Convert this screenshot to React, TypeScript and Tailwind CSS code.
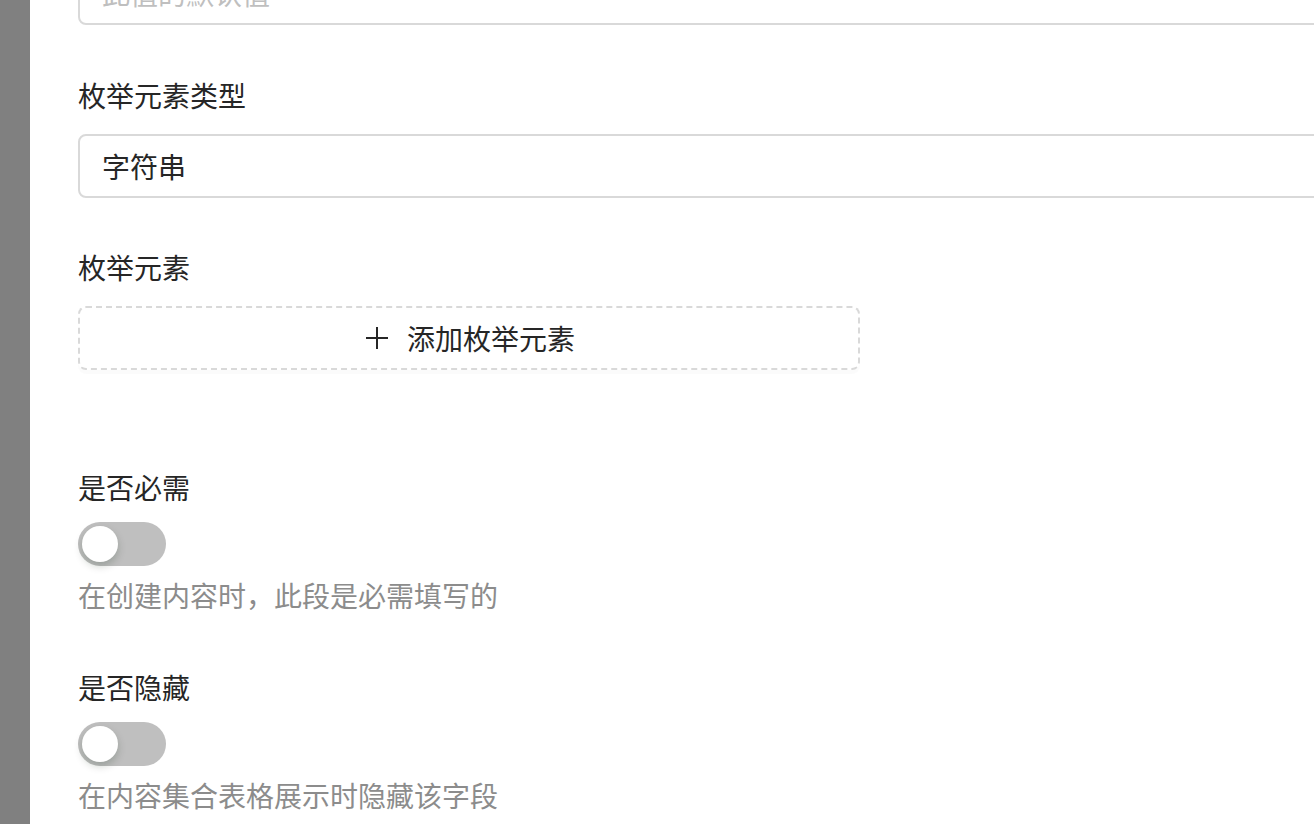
import React from "react";

const font = { fontFamily: '"Noto Sans CJK SC", "Noto Sans", sans-serif' };

function Label({ children, className = "" }: { children: React.ReactNode; className?: string }) {
  return <div className={`text-[28px] leading-[44px] text-[#262626] ${className}`}>{children}</div>;
}

function Switch({ className = "" }: { className?: string }) {
  return (
    <div className={`relative w-[88px] h-[44px] rounded-full bg-[#bfbfbf] ${className}`}>
      <div className="absolute left-[4px] top-[4px] w-[36px] h-[36px] rounded-full bg-white shadow-[0_4px_8px_0_rgba(0,35,11,0.2)]" />
    </div>
  );
}

export default function App() {
  return (
    <div className="flex w-[1314px] h-[824px] overflow-hidden bg-white" style={font}>
      <div className="w-[30px] shrink-0 bg-[#808080]" />
      <div className="flex-1 bg-white pl-[48px] overflow-hidden">
        <div className="flex flex-col w-[1280px]">
          <div className="mt-[-39px] h-[64px] border-2 border-[#d9d9d9] rounded-[8px] px-[22px] flex items-center text-[28px] text-[#bfbfbf]">
            此值的默认值
          </div>

          <Label className="mt-[48px]">枚举元素类型</Label>
          <div className="mt-[17px] h-[64px] border-2 border-[#d9d9d9] rounded-[8px] px-[22px] flex items-center text-[28px] text-[#262626]">
            字符串
          </div>

          <Label className="mt-[47px]">枚举元素</Label>
          <div className="mt-[17px] w-[782px] h-[64px] border-2 border-dashed border-[#d9d9d9] rounded-[8px] flex items-center justify-center text-[28px] text-[#262626] shadow-[0_4px_0_rgba(0,0,0,0.015)]">
            <svg width="22" height="22" viewBox="0 0 22 22" className="mr-[19px] ml-[3px]">
              <path d="M11 0v22M0 11h22" stroke="#262626" strokeWidth="2" fill="none" />
            </svg>
            <span>添加枚举元素</span>
          </div>

          <Label className="mt-[95px]">是否必需</Label>
          <Switch className="mt-[13px]" />
          <div className="mt-[7px] text-[28px] leading-[44px] text-[#8c8c8c]">在创建内容时，此段是必需填写的</div>

          <Label className="mt-[48px]">是否隐藏</Label>
          <Switch className="mt-[13px]" />
          <div className="mt-[7px] text-[28px] leading-[44px] text-[#8c8c8c]">在内容集合表格展示时隐藏该字段</div>
        </div>
      </div>
    </div>
  );
}
